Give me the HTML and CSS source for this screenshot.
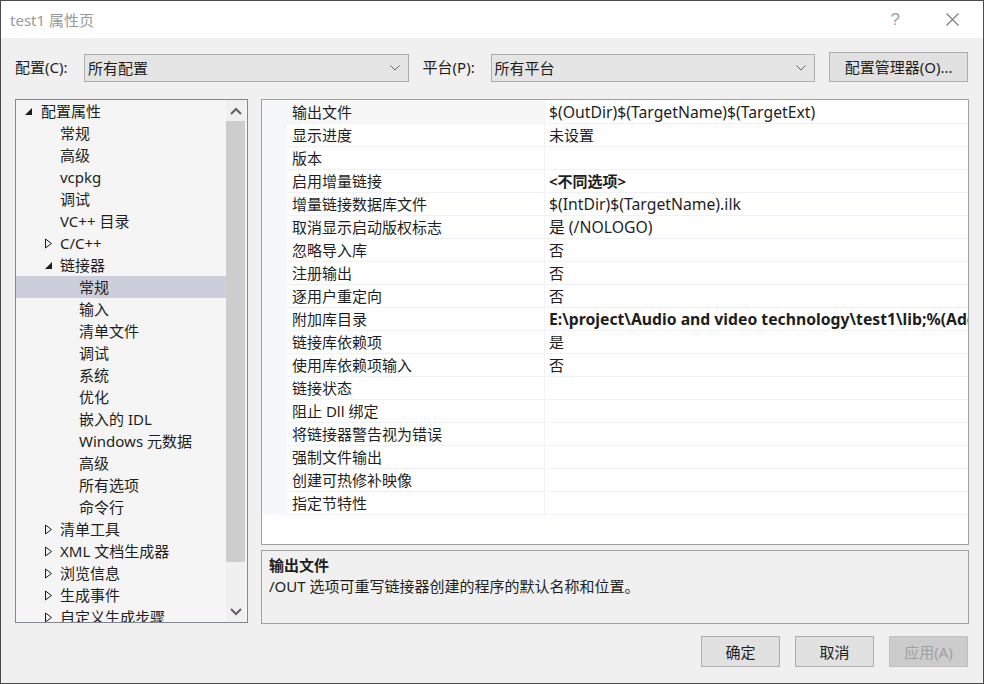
FILE: index.html
```html
<!DOCTYPE html>
<html lang="zh-CN">
<head>
<meta charset="utf-8">
<title>test1 属性页</title>
<link rel="stylesheet" href="styles.css">
</head>
<body>
<div class="window">
  <div class="titlebar">
    <span class="title">test1 属性页</span>
    <span class="help">?</span>
    <span class="close"><svg width="13" height="13" viewBox="0 0 13 13"><path d="M0.5 0.5 L12.5 12.5 M12.5 0.5 L0.5 12.5" stroke="#7a7a7a" stroke-width="1.1" fill="none"/></svg></span>
  </div>
  <div class="body">
    <div class="toprow">
      <label class="lbl">配置(C):</label>
      <div class="combo combo-config"><span>所有配置</span><svg class="chev" width="10" height="6" viewBox="0 0 10 6"><path d="M0.5 0.5 L5 5 L9.5 0.5" stroke="#606060" stroke-width="1" fill="none"/></svg></div>
      <label class="lbl lbl-plat">平台(P):</label>
      <div class="combo combo-plat"><span>所有平台</span><svg class="chev" width="10" height="6" viewBox="0 0 10 6"><path d="M0.5 0.5 L5 5 L9.5 0.5" stroke="#606060" stroke-width="1" fill="none"/></svg></div>
      <button class="btn btn-mgr">配置管理器(O)...</button>
    </div>
    <div class="main">
      <div class="tree">
        <div class="tree-list">
          <div class="ti l0"><span class="tw"><svg width="9" height="9" viewBox="0 0 9 9"><path d="M8 1 L8 8 L1 8 Z" fill="#1e1e1e"/></svg></span>配置属性</div>
          <div class="ti l1"><span class="tw"></span>常规</div>
          <div class="ti l1"><span class="tw"></span>高级</div>
          <div class="ti l1"><span class="tw"></span>vcpkg</div>
          <div class="ti l1"><span class="tw"></span>调试</div>
          <div class="ti l1"><span class="tw"></span>VC++ 目录</div>
          <div class="ti l1"><span class="tw"><svg width="9" height="11" viewBox="0 0 9 11"><path d="M1.5 1 L7.5 5.5 L1.5 10 Z" stroke="#1e1e1e" stroke-width="1" fill="none"/></svg></span>C/C++</div>
          <div class="ti l1"><span class="tw"><svg width="9" height="9" viewBox="0 0 9 9"><path d="M8 1 L8 8 L1 8 Z" fill="#1e1e1e"/></svg></span>链接器</div>
          <div class="ti l2 sel"><span class="tw"></span>常规</div>
          <div class="ti l2"><span class="tw"></span>输入</div>
          <div class="ti l2"><span class="tw"></span>清单文件</div>
          <div class="ti l2"><span class="tw"></span>调试</div>
          <div class="ti l2"><span class="tw"></span>系统</div>
          <div class="ti l2"><span class="tw"></span>优化</div>
          <div class="ti l2"><span class="tw"></span>嵌入的 IDL</div>
          <div class="ti l2"><span class="tw"></span>Windows 元数据</div>
          <div class="ti l2"><span class="tw"></span>高级</div>
          <div class="ti l2"><span class="tw"></span>所有选项</div>
          <div class="ti l2"><span class="tw"></span>命令行</div>
          <div class="ti l1"><span class="tw"><svg width="9" height="11" viewBox="0 0 9 11"><path d="M1.5 1 L7.5 5.5 L1.5 10 Z" stroke="#1e1e1e" stroke-width="1" fill="none"/></svg></span>清单工具</div>
          <div class="ti l1"><span class="tw"><svg width="9" height="11" viewBox="0 0 9 11"><path d="M1.5 1 L7.5 5.5 L1.5 10 Z" stroke="#1e1e1e" stroke-width="1" fill="none"/></svg></span>XML 文档生成器</div>
          <div class="ti l1"><span class="tw"><svg width="9" height="11" viewBox="0 0 9 11"><path d="M1.5 1 L7.5 5.5 L1.5 10 Z" stroke="#1e1e1e" stroke-width="1" fill="none"/></svg></span>浏览信息</div>
          <div class="ti l1"><span class="tw"><svg width="9" height="11" viewBox="0 0 9 11"><path d="M1.5 1 L7.5 5.5 L1.5 10 Z" stroke="#1e1e1e" stroke-width="1" fill="none"/></svg></span>生成事件</div>
          <div class="ti l1"><span class="tw"><svg width="9" height="11" viewBox="0 0 9 11"><path d="M1.5 1 L7.5 5.5 L1.5 10 Z" stroke="#1e1e1e" stroke-width="1" fill="none"/></svg></span>自定义生成步骤</div>
        </div>
        <div class="vscroll">
          <div class="sb-btn"><svg width="12" height="8" viewBox="0 0 12 8"><path d="M1 7 L6 2 L11 7" stroke="#606060" stroke-width="2" fill="none"/></svg></div>
          <div class="sb-track"><div class="sb-thumb"></div></div>
          <div class="sb-btn"><svg width="12" height="8" viewBox="0 0 12 8"><path d="M1 1 L6 6 L11 1" stroke="#606060" stroke-width="2" fill="none"/></svg></div>
        </div>
      </div>
      <div class="right">
        <div class="grid">
          <div class="rows">
            <div class="row first"><div class="gut"></div><div class="name">输出文件</div><div class="val lat">$(OutDir)$(TargetName)$(TargetExt)</div></div>
            <div class="row"><div class="gut"></div><div class="name">显示进度</div><div class="val">未设置</div></div>
            <div class="row"><div class="gut"></div><div class="name">版本</div><div class="val"></div></div>
            <div class="row"><div class="gut"></div><div class="name">启用增量链接</div><div class="val b">&lt;不同选项&gt;</div></div>
            <div class="row"><div class="gut"></div><div class="name">增量链接数据库文件</div><div class="val lat">$(IntDir)$(TargetName).ilk</div></div>
            <div class="row"><div class="gut"></div><div class="name">取消显示启动版权标志</div><div class="val lat">是 (/NOLOGO)</div></div>
            <div class="row"><div class="gut"></div><div class="name">忽略导入库</div><div class="val">否</div></div>
            <div class="row"><div class="gut"></div><div class="name">注册输出</div><div class="val">否</div></div>
            <div class="row"><div class="gut"></div><div class="name">逐用户重定向</div><div class="val">否</div></div>
            <div class="row"><div class="gut"></div><div class="name">附加库目录</div><div class="val b lat">E:\project\Audio and video technology\test1\lib;%(AdditionalLibraryDirectories)</div></div>
            <div class="row"><div class="gut"></div><div class="name">链接库依赖项</div><div class="val">是</div></div>
            <div class="row"><div class="gut"></div><div class="name">使用库依赖项输入</div><div class="val">否</div></div>
            <div class="row"><div class="gut"></div><div class="name">链接状态</div><div class="val"></div></div>
            <div class="row"><div class="gut"></div><div class="name">阻止 Dll 绑定</div><div class="val"></div></div>
            <div class="row"><div class="gut"></div><div class="name">将链接器警告视为错误</div><div class="val"></div></div>
            <div class="row"><div class="gut"></div><div class="name">强制文件输出</div><div class="val"></div></div>
            <div class="row"><div class="gut"></div><div class="name">创建可热修补映像</div><div class="val"></div></div>
            <div class="row"><div class="gut"></div><div class="name">指定节特性</div><div class="val"></div></div>
          </div>
        </div>
        <div class="desc">
          <div class="desc-title">输出文件</div>
          <div class="desc-text">/OUT 选项可重写链接器创建的程序的默认名称和位置。</div>
        </div>
      </div>
    </div>
    <div class="buttons">
      <button class="btn btn-ok">确定</button>
      <button class="btn">取消</button>
      <button class="btn dis">应用(A)</button>
    </div>
  </div>
</div>
</body>
</html>
```

FILE: styles.css
```css
* { box-sizing: border-box; }
html, body { margin: 0; padding: 0; }
body {
  font-family: "Noto Sans", "Noto Sans CJK SC", sans-serif;
  font-size: 15px;
  color: #1e1e1e;
  background: #ffffff;
}
.window {
  width: 984px;
  height: 684px;
  border: 1px solid #4a4a4a;
  display: flex;
  flex-direction: column;
  overflow: hidden;
  background: #f0f0f0;
}
.titlebar {
  height: 37px;
  background: #ffffff;
  display: flex;
  align-items: center;
  flex-shrink: 0;
}
.title {
  margin-left: 9px;
  color: #999999;
  font-size: 15px;
  flex: 1;
  line-height: 20px;
  padding-top: 1px;
}
.help {
  color: #a0a0a0;
  font-size: 17px;
  font-family: "Liberation Sans", sans-serif;
  margin-right: 46px;
  padding-top: 0;
}
.close {
  width: 13px;
  height: 13px;
  margin-right: 24px;
  display: flex;
}
.body {
  flex: 1;
  display: flex;
  flex-direction: column;
  padding: 14px 14px 0 14px;
}
.toprow {
  display: flex;
  align-items: center;
  height: 30px;
}
.lbl {
  width: 69px;
  line-height: 20px;
}
.lbl-plat {
  width: 68px;
  margin-left: 14px;
}
.combo {
  height: 28px;
  background: #e5e5e5;
  border: 1px solid #adadad;
  display: flex;
  align-items: center;
  padding-left: 3px;
  padding-right: 8px;
  justify-content: space-between;
  margin-top: 2px;
}
.combo span { line-height: 20px; }
.combo-config { width: 325px; }
.combo-plat { width: 325px; }
.btn {
  font-family: inherit;
  font-size: 15px;
  color: #1e1e1e;
  background: #e1e1e1;
  border: 1px solid #adadad;
  padding: 0;
  line-height: 20px;
}
.btn-mgr {
  width: 139px;
  height: 30px;
  margin-left: 14px;
  margin-right: 1px;
}
.main {
  display: flex;
  margin-top: 17px;
  gap: 13px;
}
.tree {
  width: 233px;
  height: 524px;
  border: 1px solid #828790;
  background: #f5f5f5;
  display: flex;
  overflow: hidden;
}
.tree-list {
  flex: 1;
  overflow: hidden;
}
.ti {
  height: 22px;
  line-height: 22px;
  display: flex;
  align-items: center;
  white-space: nowrap;
}
.tw {
  width: 17px;
  display: inline-flex;
  align-items: center;
  justify-content: flex-start;
  flex-shrink: 0;
}
.l0 { padding-left: 8px; }
.l0 .tw { width: 17px; }
.l1 { padding-left: 28px; }
.l1 .tw { width: 16px; }
.l2 { padding-left: 63px; }
.l2 .tw { width: 0; }
.sel { background: #cccedb; }
.vscroll {
  width: 19px;
  margin-right: 2px;
  display: flex;
  flex-direction: column;
  background: #f0f0f0;
}
.sb-btn {
  height: 21px;
  display: flex;
  align-items: center;
  justify-content: center;
}
.sb-track {
  flex: 1;
  display: flex;
  flex-direction: column;
}
.sb-thumb {
  height: 441px;
  background: #cdcdcd;
}
.right {
  width: 708px;
  display: flex;
  flex-direction: column;
  gap: 5px;
}
.grid {
  height: 446px;
  border: 1px solid #a0a0a0;
  background: #ffffff;
  padding-top: 1px;
}
.row {
  display: flex;
  height: 23px;
}
.gut {
  width: 25px;
  background: #f5f7fb;
}
.name {
  width: 258px;
  padding-left: 5px;
  line-height: 22px;
  border-bottom: 1px solid #f0f2f7;
  border-right: 1px solid #f0f2f7;
  white-space: nowrap;
  overflow: hidden;
}
.val {
  flex: 1;
  padding-left: 4px;
  line-height: 22px;
  border-bottom: 1px solid #f0f2f7;
  white-space: nowrap;
  overflow: hidden;
}
.val.lat { font-size: 15.75px; }
.first .name { background: #f7f7f7; }
.b { font-weight: bold; }
.desc {
  height: 74px;
  border: 1px solid #a0a0a0;
  background: #f0f0f0;
  padding: 4px 7px;
}
.desc-title {
  font-weight: bold;
  line-height: 20px;
}
.desc-text {
  line-height: 22px;
}
.buttons {
  display: flex;
  justify-content: flex-end;
  gap: 15px;
  margin-top: 12px;
  margin-right: 1px;
}
.buttons .btn {
  width: 79px;
  height: 31px;
}
.btn.dis {
  background: #cccccc;
  border-color: #bfbfbf;
  color: #a0a0a0;
}
```
